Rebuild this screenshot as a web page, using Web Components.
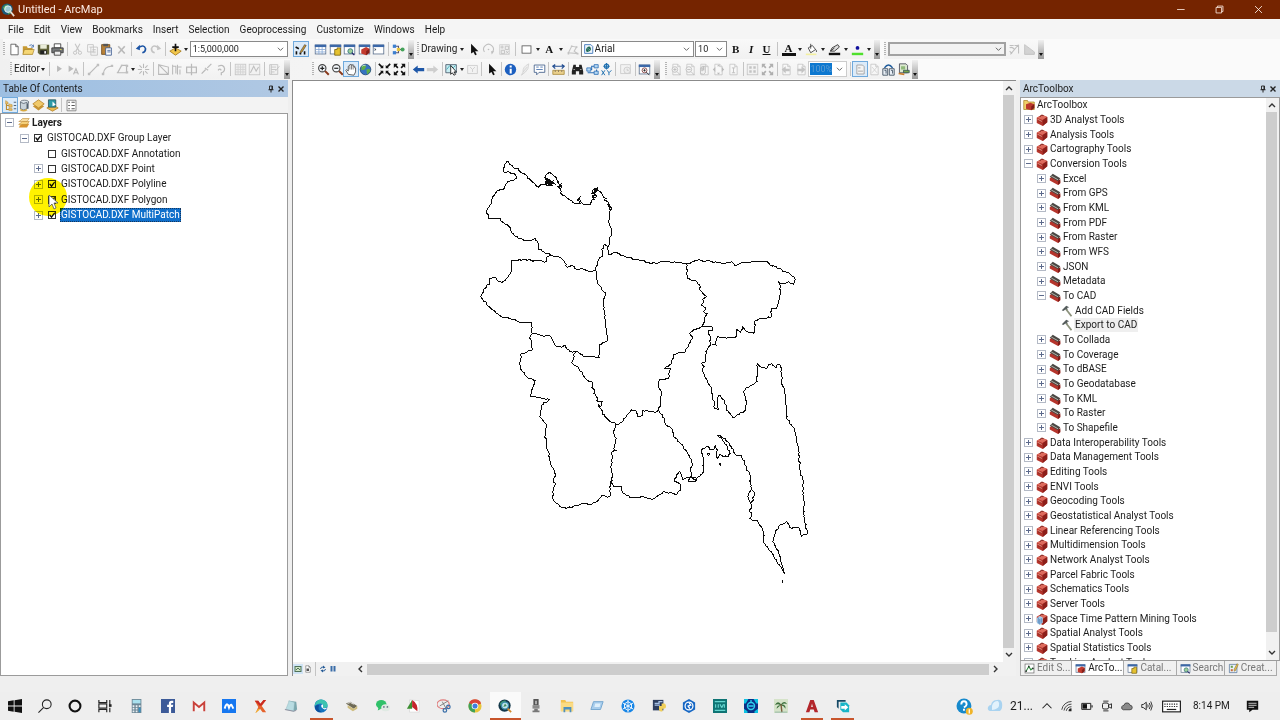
<!DOCTYPE html>
<html lang="en">
<head>
<meta charset="utf-8">
<title>Untitled - ArcMap</title>
<style>
html, body { margin: 0; height: 100%; }
body { font: 10px/14px Roboto, "Open Sans", sans-serif; color: #1c1c1c; background: #efefef; overflow: hidden; }
</style>
</head>
<body>
<arc-app></arc-app>
<script>
const define = (name, render) => customElements.define(name, class extends HTMLElement {
  connectedCallback() {
    if (this.shadowRoot) return;
    const root = this.attachShadow({ mode: 'open' });
    const t = document.createElement('template');
    t.innerHTML = render(this);
    root.append(t.content.cloneNode(true));
  }
});
const attr = (el, n, d = '') => el.getAttribute(n) ?? d;

/* Icons on a 16 x 16 grid */
const win = (extra = '') => `<rect x="1.5" y="2.5" width="13" height="11" fill="#fff" stroke="#5a6f8c"/><rect x="1" y="2" width="14" height="3" fill="#3c68a8"/>${extra}`;
const page = (extra = '') => `<path d="M3.500 1.500h6l3 3v10h-9z" fill="#fff" stroke="#555"/><path d="M9.500 1.500v3h3" fill="none" stroke="#555"/>${extra}`;
const lens = s => `<circle cx="6.500" cy="6.500" r="4.500" fill="#f4f8fc" stroke="#444" stroke-width="1.400"/><path d="M10 10l4.500 4.500" stroke="#8a3a1c" stroke-width="2.500"/><path d="${s}" stroke="#222" stroke-width="1.500"/>`;
const ln = (d, c = '#333', w = 1.3) => `<path d="${d}" fill="none" stroke="${c}" stroke-width="${w}"/>`;
const toolbox = '<path d="M1 5l7-4 7 3v7l-6 5-8-4z" fill="#b5352c"/><path d="M1 5l7-4 7 3-6 4z" fill="#dd6a5c"/><path d="M9 8l6-4v7l-6 5z" fill="#8c1f1a"/><path d="M5 4q2-4 5-2M4 8v2M7 9v2" stroke="#5c100e" fill="none"/><path d="M2 7l6 3" stroke="#f3b0a0"/>';
const ICONS = {
  arcmap: '<circle cx="7" cy="7" r="6.500" fill="#1c5a78"/><path d="M2 5q3-4 6-3l-1 4-3 3zM8 9l4-2-1 5-3 1z" fill="#4c9a5c"/><circle cx="8" cy="7" r="3.800" fill="#b9e2ee" fill-opacity=".8" stroke="#e9f4f8"/><path d="M11 10l4 5" stroke="#e8ddd0" stroke-width="2"/>',
  arcmapdark: '<circle cx="7.500" cy="7.500" r="7" fill="#14384a"/><path d="M2 5q3-4 7-3l-1 4-4 4z" fill="#3f9a6c"/><circle cx="8" cy="7.500" r="4" fill="#bfe4ee" stroke="#3a8da8" stroke-width="1.500"/><path d="M6 9l2-4 2 3z" fill="#47905c"/><path d="M11 11l4 4" stroke="#d08a2c" stroke-width="2"/>',
  new: page(), 
  open: '<path d="M1 4h5l1 2h6v8H1z" fill="#c79a33"/><path d="M3 8h12l-2 6H1z" fill="#f6d775" stroke="#9a7420" stroke-width=".7"/><path d="M9 3q3-2 5 1m0-2v3h-3" fill="none" stroke="#3c68a8"/>',
  save: '<path d="M1 2h14v12H3l-2-2z" fill="#5f6038"/><rect x="4" y="2" width="8" height="5" fill="#e9ecd8"/><rect x="4" y="9" width="8" height="5" fill="#222"/><rect x="9" y="10" width="2" height="3" fill="#fff"/>',
  print: '<path d="M4 1h8v5H4z" fill="#fff" stroke="#333"/><path d="M1 6h14v6H1z" fill="#777a7c" stroke="#333"/><path d="M4 10h8v5H4z" fill="#eee" stroke="#333"/><path d="M11 8h2" stroke="#e8e04c"/>',
  cut: ln('M5 1l5 9M11 1l-5 9', '#555') + '<circle cx="5" cy="12" r="2" fill="none" stroke="#444"/><circle cx="11" cy="12" r="2" fill="none" stroke="#444"/>',
  copy: '<path d="M2 2h7v9H2zM6 5h8v10H6z" fill="#fff" stroke="#444"/><path d="M8 8h4M8 10h4M8 12h4M4 5h2" stroke="#555"/>',
  paste: '<path d="M2 2h10v12H2z" fill="#b98238" stroke="#6c4a1c"/><path d="M4 1h6v3H4z" fill="#555"/><path d="M7 6h7v9H7z" fill="#fff" stroke="#35558c"/><path d="M9 9h4M9 11h4" stroke="#35558c"/>',
  del: ln('M4 4l8 9M12 4l-8 9', '#333', 2),
  undo: '<path d="M4 6q7-5 9 1 0 4-4 5" fill="none" stroke="#1d55a5" stroke-width="2"/><path d="M1 7l5-5v7z" fill="#1d55a5"/>',
  redo: '<path d="M12 6q-7-5-9 1 0 4 4 5" fill="none" stroke="#555" stroke-width="2"/><path d="M15 7l-5-5v7z" fill="#555"/>',
  add: '<path d="M8 6l7 4-7 5-7-5z" fill="#f2c74c" stroke="#a47818"/><path d="M7 1h2v3h3v2H9v4H7V6H4V4h3z" fill="#111"/>',
  edittool: ln('M2 5l4 2M2 13h2m3 0h2m3 0h2M3 10v2M13 10v2', '#111', 2) + '<path d="M8 10l5-8 2 1-5 8-3 2z" fill="#c69532" stroke="#222" stroke-width=".6"/>',
  table: win('<path d="M1.500 8h13M1.500 11h13M6 5v9M10 5v9" stroke="#88a9d6"/>'),
  catalog: win('<path d="M7 8h3V6h4v9H7z" fill="#e5c12f" stroke="#7a6410"/>'),
  searchw: win('<circle cx="9" cy="10" r="3" fill="#9fd09a" stroke="#2b6f77"/><path d="M11 12l3 3" stroke="#226" stroke-width="1.500"/>'),
  toolw: win('<path d="M4 8l6-3 4 2v5l-4 3-6-2z" fill="#c33a2e"/><path d="M10 10l4-3v5l-4 3z" fill="#86201a"/>'),
  python: win('<path d="M3 7l2 1-2 1" fill="none" stroke="#234"/>'),
  model: ln('M4 4h4v4h4M4 12h4V8', '#557') + '<rect x="1" y="2" width="4" height="4" fill="#3c7fd0"/><rect x="1" y="10" width="4" height="4" fill="#3c7fd0"/><rect x="6" y="6" width="4" height="4" fill="#e8c53a"/><circle cx="13" cy="8" r="2.500" fill="#44a35a"/>',
  pointer: '<path d="M5 1v12l3-2 2 4 2-1-2-4h4z" fill="#111"/>',
  rotate: ln('M3 11A6 6 0 1 1 13 11', '#444') + '<circle cx="8" cy="8" r="1" fill="#444"/><path d="M11 10h4l-3 4z" fill="#444"/>',
  group: '<path d="M2 2h12v12H2z" fill="#ddd" stroke="#777"/><path d="M3 5h4M5 3v4M9 4h4v4H9zM4 9h4v4H4zM10 10l3 3m0-3l-3 3" stroke="#444" fill="none"/>',
  rect: '<rect x="2.500" y="3.500" width="11" height="9" fill="#fff" stroke="#555"/>',
  nodes: ln('M3 12l4-8 6 1-3 5 4 3z', '#555') + '<path d="M2 11h2v3H2zM6 3h2v2H6zM12 4h2v2h-2zM13 12h2v2h-2z" fill="#555"/>',
  fill: '<path d="M4 6l5-3 4 5-6 4z" fill="#fff" stroke="#333"/><path d="M7 1v6M13 8q2 2 1 3" stroke="#333" fill="none"/><path d="M1 13h13v2H1z" fill="#f3f0a0"/>',
  pen: '<path d="M3 10l2-4 7-4 2 3-6 5z" fill="#ddd" stroke="#222"/><path d="M3 10l5-4" stroke="#222"/><path d="M1 12h14v3H1z" fill="#111"/>',
  marker: '<circle cx="8" cy="6" r="2.300" fill="#10109c"/><path d="M1 12h14v3H1z" fill="#4fe02c"/>',
  hatch: ln('M2 3h5M2 6q3-2 6 2M3 14l10-12M8 3h5v10M2 10l3 3', '#444'),
  tri: '<path d="M2 2v12h12v-3z" fill="#888" stroke="#444"/>',
  play: '<path d="M5 3v8l6-4z" fill="#333"/>', playa: '<path d="M2 3v8l6-4z" fill="#333"/><path d="M8 14l3-7 3 7M9 12h4" fill="none" stroke="#333" stroke-width="1.500"/>',
  line: ln('M3 13L13 3', '#333', 1.5) + '<path d="M1 12h3v3H1zM12 1h3v3h-3z" fill="#444"/>',
  arc: ln('M3 13Q4 4 13 4', '#333', 1.5) + '<path d="M1 12h3v3H1zM12 2h3v3h-3z" fill="#444"/>',
  poly: ln('M2 12l5-9h6v9M1 12h12', '#333', 1.5) + '<path d="M6 2h2v2H6zM12 2h3v3h-3zM12 10h3v3h-3z" fill="#444"/>',
  star: ln('M8 1v5M8 10v5M1 8h5M10 8h5M3 3l3 3M13 3l-3 3M3 13l3-3M13 13l-3-3', '#333'),
  cutp: ln('M2 2v12h12V5zM2 2l12 12', '#333') , align: ln('M2 2v12M2 4h4v9M8 2v12M8 5h5M11 8v6', '#333'),
  split: ln('M2 5h12v7H2zM8 1v14', '#333', 1.5), slash: ln('M2 13l5-5M9 6l5-5M6 6l4 3', '#333', 1.5), rot: ln('M5 4q7-3 8 3 0 4-4 5v3M5 9q2-3 4 0', '#333', 1.5),
  grid: '<rect x="1.500" y="1.500" width="13" height="13" fill="#ddd" stroke="#555"/><path d="M2 5h12M2 8h12M2 11h12M5 2v12M8 2v12M11 2v12" stroke="#888"/>',
  sketch: '<rect x="1.500" y="1.500" width="13" height="13" fill="#eee" stroke="#555"/>' + ln('M3 12l4-8 3 6 3-5', '#444'),
  form: '<path d="M2 2h10v12H2z" fill="#eee" stroke="#444"/><path d="M4 5h6M4 8h6M4 11h4M4 2v12M9 10l5-6" stroke="#444"/>',
  zoomin: lens('M4 6.500h5M6.500 4v5'), zoomout: lens('M4 6.500h5'),
  pan: '<path d="M4 14L1 9l1-1 2 2V4l2-1v-1h2v1l2-1v2h2v2h1v5l-2 4z" fill="#fff" stroke="#444"/><path d="M6 4v4M8 3v5M10 4v4" stroke="#666"/>',
  globe: '<circle cx="8" cy="8" r="6.500" fill="#3673c0" stroke="#1d4472"/><path d="M3 4q4-3 6 0l-2 4-4 1zM9 8l4-1 1 3-4 4z" fill="#5fae48"/><path d="M4 4q2-2 4-1" stroke="#cfe7ff" fill="none"/>',
  fixin: ln('M1 1l4 4M15 1l-4 4M1 15l4-4M15 15l-4-4', '#111', 2) + '<path d="M6.500 2.500v4h-4zM9.500 2.500v4h4zM6.500 13.500v-4h-4zM9.500 13.500v-4h4z" fill="#111"/>',
  fixout: ln('M3 3l3 3M13 3l-3 3M3 13l3-3M13 13l-3-3', '#111', 2) + '<path d="M1 1h5L1 6zM15 1h-5l5 5zM1 15h5l-5-5zM15 15h-5l5-5z" fill="#111"/>',
  back: '<path d="M1 8l6-5v3h8v4H7v3z" fill="#1e57a8"/>', fwd: '<path d="M15 8L9 3v3H1v4h8v3z" fill="#777"/>',
  selfeat: '<path d="M1 2h13v10H1z" fill="#c9eef3" stroke="#456"/><path d="M2 8l4-5 4 3 3-3" stroke="#3aa0ac" fill="none"/><path d="M7 3v11l2-2 2 3 2-1-2-3h3z" fill="#fff" stroke="#111"/>',
  clearsel: '<path d="M2 3h12v10H2z" fill="#eee" stroke="#666"/><path d="M5 5l3 3 3-3M8 8v3" stroke="#666" fill="none"/>',
  info: '<circle cx="8" cy="8" r="7" fill="#1c5fc0"/><path d="M7 7h2.500v6H7zM7 3h2.500v2.500H7z" fill="#fff"/>',
  bolt: '<path d="M12 1Q4 5 5 11l-2 4 5-4q4-3 4-10zM5 11l5-6" fill="#ddd" stroke="#666" stroke-width=".8"/>',
  popup: '<path d="M1.500 2.500h13v9h-7l-3 3v-3h-3z" fill="#fff" stroke="#3c5a86"/><path d="M4 5h3M9 5h3M4 8h8" stroke="#3c68a8"/>',
  measure: '<path d="M1 9h14v5H1z" fill="#ead08c" stroke="#a98a3c"/><path d="M1 4h14M4 2L1 4l3 3M12 2l3 2-3 3" stroke="#244f92" fill="none" stroke-width="1.500"/><path d="M4 9v2M8 9v2M12 9v2" stroke="#765"/>',
  find: '<path d="M3 2h3v3h4V2h3l2 8v4h-5v-4H6v4H1v-4z" fill="#222"/><path d="M3 8h2M11 8h2" stroke="#bbb"/>',
  route: ln('M2 8h5V4h7M2 12h11V8', '#2c6fb6') + '<path d="M1 6h5v4H1zM10 2h5v4h-5zM10 10h5v4h-5z" fill="#b7d8f2" stroke="#2c6fb6"/>',
  xy: '<circle cx="8" cy="4" r="2.500" fill="none" stroke="#1e6fb0" stroke-width="1.500"/><path d="M8 0v8M4 4h8M2 9l4 6M6 9l-4 6M9 9l2 3 3-3M11 12v3" stroke="#1e6fb0" fill="none" stroke-width="1.200"/>',
  time: '<path d="M2 2h12v11H2z" fill="#eee" stroke="#666"/><circle cx="10" cy="9" r="4" fill="#ddd" stroke="#666"/><path d="M10 7v2h2" stroke="#555" fill="none"/>',
  viewer: win('<circle cx="8" cy="9" r="3" fill="#fff" stroke="#7a3030"/><path d="M10 11l4 4M6.500 9h3M8 7.500v3" stroke="#222"/>'),
  dz1: page('<circle cx="6" cy="8" r="3.500" fill="#eee" stroke="#333"/><path d="M4 8h4M6 6v4M9 11l4 4" stroke="#333"/>'),
  dz2: page('<circle cx="6" cy="8" r="3.500" fill="#eee" stroke="#333"/><path d="M4 8h4M9 11l4 4" stroke="#333"/>'),
  dz3: page('<path d="M3 13V6h2v4-6h2v5-5h2v8l-2 2z" fill="#eee" stroke="#333"/>'),
  dz4: page('<path d="M1 8l3-3v6zM15 8l-3-3v6zM8 2l-2 2h4zM8 14l-2-2h4z" fill="#333"/>'),
  dz5: page('<path d="M6 6h4M8 6v6M6 12h4" stroke="#333"/>'),
  dz6: '<rect x="1.500" y="1.500" width="13" height="13" fill="#eee" stroke="#555"/><path d="M4 4h3v3H4zM9 4h3v3H9zM4 9h3v3H4zM9 9h3v3H9z" fill="#555"/>',
  dz7: page('<path d="M2 8l5-4v3h5v3H7v3z" fill="#555"/>'), dz8: page('<path d="M13 8L8 4v3H3v3h5v3z" fill="#555"/>'),
  draft: '<path d="M3.500 2.500h7l2 2v9h-9z" fill="#f4f4f4" stroke="#999"/><path d="M5 6h3M5 10h6" stroke="#999"/>',
  tog: page('<path d="M5 5l6 7M5 12l6-7" stroke="#777"/>'),
  swap: '<path d="M3 6q5-7 10 0" fill="none" stroke="#1f5c9c" stroke-width="1.800"/><path d="M1 7h6v8H1zM9 7h6v8H9z" fill="#e8eef5" stroke="#345"/><path d="M3 9h2v4M11 9h2v4" stroke="#345" fill="none"/>',
  ddp: '<path d="M3 1h8l2 2v9H3z" fill="#dbe9d0" stroke="#445"/><path d="M5 4h5v4H5z" fill="#8fb87a"/><path d="M8 9h7v3H8z" fill="#76a34c" stroke="#355"/><path d="M2 13l7 1" stroke="#c87c2c" stroke-width="2"/>',
  listorder: '<path d="M2 2l3 2v2H2zM6 6l4 1v3H6zM6 11l4 1v2H6z" fill="#e9bd67" stroke="#b98a30" stroke-width=".6"/><path d="M12 4h3M12 8h3M12 12h3" stroke="#567" stroke-width="1.500"/>' + ln('M3 6v7h3M3 8h3', '#b98a30'),
  listsrc: '<path d="M5 3h8v9H5z" fill="#4d5d6c"/><ellipse cx="8" cy="4" rx="5" ry="2.500" fill="#dce4ea" stroke="#5c6872"/><path d="M3 4v8q4 3 8 0V4q-4 3-8 0" fill="#c9d3da" stroke="#5c6872"/><path d="M3 13q4 3 8 0" stroke="#d8a93f" stroke-width="2" fill="none"/>',
  listvis: '<path d="M8 5l7 4-7 5-7-5z" fill="#c99534"/><path d="M8 1l7 5-7 5-7-5z" fill="#f1c969" stroke="#b8862c"/>',
  listsel: '<path d="M8 7l7 4-7 4-7-4z" fill="#e8b94f" stroke="#b8862c"/><path d="M3 1h9v9H3z" fill="#2d9ba8" stroke="#28515c"/><path d="M8 3v6l4-2z" fill="#fff"/>',
  options: '<path d="M2.500 1.500h11v13h-11z" fill="#fff" stroke="#777"/><path d="M4 4h2M4 8h2M4 12h2M8 4h4M8 8h4M8 12h4" stroke="#555" stroke-width="1.400"/>',
  layers: '<path d="M3 11l3-2h9l-3 5H1z" fill="#d9952f"/><path d="M3 8l3-2h9l-3 4H1z" fill="#f5cf77" stroke="#b97e22" stroke-width=".7"/><path d="M3 5l3-3h9l-3 4H1z" fill="#f8dda0" stroke="#b97e22" stroke-width=".7"/>',
  toolbox,
  toolroot: '<path d="M1 2h5l1 2h8v10H1z" fill="#f1cf68" stroke="#a9842a"/><path d="M4 7l6-2 5 2v5l-4 3-7-2z" fill="#bb382c"/><path d="M11 10l4-3v5l-4 3z" fill="#7f1c18"/>',
  toolset: '<path d="M1 7l4-3 10 6v4l-3 2L1 10z" fill="#b5352c"/><path d="M1 5l4-4 10 6-3 4z" fill="#4a4844"/><path d="M3 4l9 5" stroke="#d9d4c8"/><path d="M12 11l3-3v5l-3 3z" fill="#7c1a16"/>',
  hammer: '<path d="M1 7l6-6 4 2-3 1 1 2-2 1-1-1-3 2z" fill="#555c5c"/><path d="M7 6l7 9" stroke="#8c927c" stroke-width="2.400"/>',
  spacetime: toolbox + '<path d="M1 7l4-3 4 2v7l-4 3-4-3z" fill="#a9cdea"/><path d="M3 6v8M5 8v7M7 7v6" stroke="#4377b2"/>',
  editw: '<rect x="1.500" y="1.500" width="13" height="13" fill="#fff" stroke="#666"/><path d="M3 12l4-7 3 5 3-3" stroke="#2b8b3c" fill="none" stroke-width="1.500"/><path d="M2 11h2v2H2zM6 4h2v2H6zM12 7h2v2h-2z" fill="#222"/>',
  create: '<path d="M2 2h11v12H2z" fill="#e8f0f8" stroke="#4d6d94"/><path d="M4 4h3v3H4z" fill="#6b9f48"/><path d="M4 9h3v3H4z" fill="#c76c3c"/><path d="M9 9l4-8 2 1-4 9-2 1z" fill="#e6bf51" stroke="#6c5418" stroke-width=".6"/>',
  refresh: ln('M3 8q1-5 6-4M13 8q-1 5-6 4', '#245a96', 2) + '<path d="M8 1l5 4-5 2zM8 15l-5-4 5-2z" fill="#245a96"/>',
  pause: '<path d="M3 2h4v11H3zM9 2h4v11H9z" fill="#3a6da8"/>',
  dataview: '<path d="M1 2h14v12H1z" fill="#4f7258"/><path d="M3 4h10v8H3z" fill="#cfe5c4"/><path d="M4 10l4-4 4 4" stroke="#4f7258" fill="none" stroke-width="2"/>',
  layoutview: page('<path d="M5 7h5v5H5z" fill="#555"/>'),
  fontname: '<path d="M1 1h10l3 3v11H1z" fill="#eef4fb" stroke="#4a7fc0" stroke-width="1.500"/><path d="M10 5l-5 6M5 7q4-4 5 0t-5 5q-2-2 0-5" fill="none" stroke="#1f6a54" stroke-width="2"/>',
  pin: '<path d="M5 2h6v7H5z" fill="none" stroke="#222" stroke-width="1.800"/><path d="M10 2v7M3 9.500h10M8 10v5" stroke="#222" stroke-width="2"/>',
  close: ln('M3 3l10 10M13 3L3 13', 'currentColor', 2.8),
  /* taskbar */
  start: '<path d="M0 2.500l6.500-1v6H0zM7.500 1.300L16 0v7.500H7.500zM0 8.500h6.500v6L0 13.500zM7.500 8.500H16V16l-8.500-1.300z" fill="#111"/>',
  search: '<circle cx="10" cy="6" r="5" fill="none" stroke="#222" stroke-width="1.200"/><path d="M6.500 9.500L0.500 15.500" stroke="#222" stroke-width="1.300"/>',
  cortana: '<circle cx="8" cy="8" r="6.200" fill="none" stroke="#111" stroke-width="2.400"/>',
  taskview: '<path d="M1 1v3h9V1M1 15v-3h9v3M1 5.500h9v5H1zM13.500 1v6M13.500 10v5" fill="none" stroke="#222" stroke-width="1.300"/><path d="M12.500 6h3v3h-3z" fill="#222"/>',
  calc: '<path d="M2 0h11v16H2z" fill="#6d8796"/><path d="M3 1h9v4H3z" fill="#a9e1ee"/><path d="M3 7h2v2H3zM6.500 7h2v2h-2zM10 7h2v2h-2zM3 10h2v2H3zM6.500 10h2v2h-2zM3 13h2v2H3zM6.500 13h2v2h-2z" fill="#e9eff2"/><path d="M10 10h2v5h-2z" fill="#3591c4"/>',
  fb: '<path d="M0 0h16v16H0z" fill="#3c5a98"/><path d="M9 16V9H7V6.500h2V5q0-3 3-3h2v2.500h-1.500q-1 0-1 1v1H14L13.500 9h-2v7z" fill="#fff"/>',
  gmail: '<path d="M1 3v11h14V3" fill="#f7f3f2"/><path d="M2 14V4l6 5 6-5v10" fill="none" stroke="#c9413a" stroke-width="2.200"/>',
  maxthon: '<path d="M0 0h16v16H0z" fill="#1677f0"/><path d="M3 11q2-7 4-4l1 3q2-5 3-3l2 4" fill="none" stroke="#fff" stroke-width="2.200"/>',
  xapp: '<path d="M2 2h4l2 4 4-5h3l-5 7 5 7h-4l-3-4-5 5 3-7z" fill="#e5622b"/><path d="M8 8L2 2h4l4 5M15 1l-5 6-2-1 4-5z" fill="#c92a24"/><path d="M3 15l3-4 2 1-5 4z" fill="#f2b32c"/>',
  note: '<path d="M5 2l9 1 1 9-4 2z" fill="#7ba7ae"/><path d="M6 2l6 2-1 10-9-2z" fill="#b8dce2" stroke="#8fb6bd" stroke-width=".5"/><path d="M1 12l10 2 3-1" stroke="#889" fill="none"/>',
  edge: '<circle cx="8" cy="8" r="7.500" fill="#1473be"/><path d="M1 6q3-7 10-5 6 3 4 8-2 2-5 1 2-5-3-5-4 0-6 3z" fill="#3cc3b0"/><path d="M6 7q-3 5 3 8-7 1-8-6 1-3 5-2z" fill="#0c4f9c"/><path d="M9 10q-2-3 1-4 1 2 0 4 2 1 5 0-1 2-3 2z" fill="#fff"/>',
  gold: '<path d="M1 5l5-2 8 5-4 3z" fill="#6e6a55"/><path d="M3 7l7 4 4-3v3l-5 3-6-4z" fill="#cdbb7c"/><path d="M3 5l3-1 4 2" stroke="#eee" fill="none"/>',
  wechat: '<ellipse cx="6" cy="6" rx="6" ry="5" fill="#2fc169"/><path d="M3 9l-1 4 4-2z" fill="#2fc169"/><ellipse cx="11" cy="10" rx="5" ry="4" fill="#dfeae3"/><circle cx="9" cy="9" r="1" fill="#678"/><circle cx="13" cy="9" r="1" fill="#678"/>',
  redgreen: '<path d="M4 1l11 1v13H4z" fill="#fff" stroke="#ccc" stroke-width=".6"/><path d="M7 1v10L1 11z" fill="#3c8f32"/><path d="M7 1q7 4 6 13L7 9z" fill="#c4242b"/>',
  snip: '<ellipse cx="7" cy="6" rx="7" ry="5" fill="none" stroke="#e07d7d" stroke-width="1.300"/><path d="M3 8l10-6M6 3l5 9" stroke="#777"/><circle cx="9" cy="13" r="2" fill="none" stroke="#3a6fa8" stroke-width="1.400"/><circle cx="13" cy="9" r="2" fill="none" stroke="#3a6fa8" stroke-width="1.400"/>',
  chrome: '<circle cx="8" cy="8" r="7.500" fill="#e8c63a"/><path d="M8 8L1 5A7.500 7.500 0 0 1 15 5z" fill="#d9443a"/><path d="M8 8L1.300 4.600A7.500 7.500 0 0 0 8 15.500z" fill="#3fa15a"/><circle cx="8" cy="8" r="3.800" fill="#fff"/><circle cx="8" cy="8" r="2.900" fill="#3f7de0"/>',
  scan: '<path d="M5 0h6v7H5z" fill="#555"/><path d="M4 7h8v4H4z" fill="#8b8b8b"/><path d="M6 11h4v2H6zM4 13h8v2H4z" fill="#777"/><path d="M7 2h2v4H7z" fill="#bbb"/>',
  explorer: '<path d="M1 1h5l1 2h8v11H1z" fill="#f2c14f"/><path d="M1 4h14v10H1z" fill="#fadb83"/><path d="M4 15V9h9v6h-2v-3H6v3z" fill="#4e90bd"/>',
  slab: '<path d="M4 3h11l-3 9H1z" fill="#a8cdec" stroke="#6ea2cd"/><path d="M6 5h6l-1 4H5z" fill="#dff0fb"/>',
  bluehex: '<circle cx="8" cy="8" r="7.500" fill="#1685e6"/><path d="M8 3l4 2.500v5L8 13l-4-2.500v-5zM8 1v14M2 4.500l12 7M14 4.500l-12 7" fill="none" stroke="#fff" stroke-width="1"/>',
  pyfile: '<path d="M1 1h12v12H1z" fill="#2d3e5e"/><path d="M3 5h5V3h4M3 7h6" stroke="#a8c2e6" stroke-width="1.500" fill="none"/><path d="M8 8h3V5h3q2 0 2 4 0 2-3 2h-1v3q-4 1-4-2z" fill="#f0cf59"/>',
  hexc: '<path d="M8 0l7 4v8l-7 4-7-4V4z" fill="#1667c4"/><circle cx="8" cy="8" r="4.500" fill="none" stroke="#fff" stroke-width="1.400"/><path d="M8 4l2 3-3 1 2 3" stroke="#fff" fill="none" stroke-width="1.500"/>',
  tealapp: '<path d="M0 0h16v16H0z" fill="#0f7474"/><path d="M2 3h12M2 13h12M3 6v4M6 6v4M8 6l2 4M12 6l-2 4M13 6v4" stroke="#66d6d0" stroke-width="1.300" fill="none"/>',
  cyanapp: '<path d="M0 0h16v16H0z" fill="#0b2f86"/><path d="M0 0h5l-3 5H0zM16 0h-5l3 5h2zM0 16v-5l4 3v2zM16 16v-5l-4 3v2z" fill="#0bc2e2"/><circle cx="8" cy="8" r="4" fill="none" stroke="#2dd1ee" stroke-width="1.600"/><path d="M5 8h6M8 1v3" stroke="#2dd1ee" stroke-width="1.500"/>',
  palm: '<path d="M0 0h16v16H0z" fill="#d5e3c9"/><path d="M8 6q-4-5-7 1 4-2 6 0-4 0-4 4 3-3 5-4 4 1 5 4 1-4-4-5 3-2 6 0-3-5-7 0z" fill="#3c6f3c"/><path d="M8 6l1 9" stroke="#7b5b3a" stroke-width="1.600"/><path d="M1 15h14" stroke="#8fb4a0"/>',
  autocad: '<path d="M1 15L6 1h4l5 14h-4l-1-3H6l-1 3z" fill="#b3262b"/><path d="M7 9h2L8 5z" fill="#f0eeee"/>',
  camt: '<path d="M1 1h10v2H3v8l-2-2z" fill="#164a66"/><path d="M5 4h7l3 3v8H8l-3-3z" fill="#18b5c8"/><path d="M6 8h4V6l4 3.500-4 3.500v-2H6z" fill="#fff"/>',
  help: '<circle cx="7.500" cy="7.500" r="7" fill="#1689cc"/><path d="M5 6q0-3 2.500-3T10 6q0 1-2.500 3M7.500 10v2" fill="none" stroke="#fff" stroke-width="1.800"/><circle cx="12.500" cy="12.500" r="3.300" fill="#f0b429"/><path d="M12.500 10.500v4" stroke="#fff" stroke-width="1.200"/>',
  weather: '<path d="M3 13q-3-1-2-4 1-2 3-2 1-5 6-5 4-1 5 3 1 5-2 8z" fill="#a9d3f0"/><path d="M5 8q1-5 6-5 2 2 1 5t-7 4z" fill="#e2f2fc"/>',
  up: ln('M2 11l6-6 6 6', '#222', 1.4),
  wifi: ln('M1 13A13 13 0 0 1 14 2M4 14A10 10 0 0 1 14 5.500M7 14.500A7 7 0 0 1 14 9', '#444', 1.3) + '<path d="M10 15a4 4 0 0 1 4-4v4z" fill="#222"/>',
  battery: '<path d="M1 4.500h12v8H1z" fill="none" stroke="#222" stroke-width="1.300"/><path d="M2 5.500h6v6H2z" fill="#111"/><path d="M14 7h1.500v3H14z" fill="#222"/>',
  meet: '<rect x="2" y="4" width="8" height="8" rx="2" fill="none" stroke="#222" stroke-width="1.300"/><path d="M10 7l4-2v6l-4-2M3 1.500h7M3 14.500h7" fill="none" stroke="#222" stroke-width="1.200"/>',
  cloud: '<path d="M3 13q-3-1-2-4 1-2 3-2 1-4 5-3 2 0 3 3 3 0 3 3t-3 3z" fill="#8b8b8b" stroke="#333"/>',
  speaker: ln('M1 6h2l4-3v10l-4-3H1zM9 6q1 2 0 4M11 4q3 4 0 8M13 2q4 6 0 12', '#222', 1.2),
  keyboard: '<rect x="0.500" y="3.500" width="15" height="9" fill="#fff" stroke="#222"/><path d="M2 6h12M2 8h12" stroke="#222" stroke-dasharray="1 1"/><path d="M4 10.500h8" stroke="#222"/>',
  notify: '<path d="M1 1h14v11H8l-4 3v-3H1z" fill="#111"/><path d="M3 4h10M3 6.500h10M3 9h7" stroke="#efefef"/>',
  wmin: ln('M3 8h11', '#fbe9e0', 1.2), wmax: ln('M3 5h8v8H3zM5 5V3h8v8h-2', '#fbe9e0', 1.2), wclose: ln('M3 3l10 10M13 3L3 13', '#fbe9e0', 1.3)
};

define('arc-icon', el => `<style>:host{display:block;flex:none;width:var(--size,14px);height:var(--size,14px)}svg{display:block;width:100%;height:100%}</style>
<svg viewBox="0 0 16 16" aria-hidden="true">${ICONS[attr(el, 'name')] || ''}</svg>`);

define('tool-button', el => {
  const glyph = attr(el, 'glyph');
  return `<style>
:host{display:block;flex:none}
button{display:grid;place-items:center;width:14px;height:16px;padding:0;border:0;background:none;font:bold 11px/12px "Liberation Serif",serif;color:#111;--size:13px}
:host([off]) arc-icon{filter:grayscale(1);opacity:.3}
:host([on]){margin:0 -1px}
:host([on]) button{width:16px;box-shadow:inset 0 0 0 1px #6fa9dc;background:#dcebf9}
:host([bar]) button{border-bottom:3px solid #111;height:14px;line-height:10px}
</style><button aria-label="${attr(el, 'label')}" ${el.hasAttribute('off') ? 'disabled' : ''}>${glyph ? `<span style="${attr(el, 'label') === 'Italic' ? 'font-style:italic' : attr(el, 'label') === 'Underline' ? 'text-decoration:underline' : ''}">${glyph}</span>` : `<arc-icon name="${attr(el, 'icon')}"></arc-icon>`}</button>`;
});

define('drop-arrow', () => `<style>:host{display:grid;place-items:center;flex:none;width:6px;height:16px}i{border:2px solid transparent;border-top:3px solid #222;border-bottom:0}</style><i></i>`);
define('tool-sep', () => `<style>:host{display:block;flex:none;width:5px;height:14px}:host([blank]){visibility:hidden}i{display:block;width:1px;height:100%;margin:0 auto;background:#c4c4c4}</style><i></i>`);

define('combo-box', el => `<style>
:host{display:grid;flex:none;width:var(--w);height:16px;align-items:center}
select,svg{grid-area:1/1}
select{appearance:none;width:100%;height:100%;padding:0 2px;border:1px solid #8a8a8a;border-radius:0;background:#fff;font:9px/12px Roboto,sans-serif;color:#222;opacity:1}
:host([inset]) select{padding-left:13px;font-size:10px}
:host([off]) select{background:#f2f2f2;border:2px solid #a2a2a2;height:14px}
:host([picked]) select{border-color:#ccc;padding:0 1px;color:#5a9bd2;background:linear-gradient(#0d78d0,#0d78d0) 1px 1px/22px 12px no-repeat #fff}
svg{justify-self:end;width:7px;height:7px;margin-right:4px;pointer-events:none}
arc-icon{grid-area:1/1;margin-left:3px;z-index:1;--size:10px}
</style><select aria-label="${attr(el, 'label')}" ${el.hasAttribute('off') || el.hasAttribute('picked') ? 'disabled' : ''}><option>${attr(el, 'value')}</option></select>
${el.hasAttribute('inset') ? '<arc-icon name="fontname"></arc-icon>' : ''}<svg viewBox="0 0 8 8" aria-hidden="true"><path d="M1 2l3 3 3-3" fill="none" stroke="#555"/></svg>`);

define('tool-bar', () => `<style>
:host{display:flex;flex:none;align-items:center;height:20px;width:var(--w);background:linear-gradient(#f9f9f9,#f1f1f1)}
.grip{width:2px;height:14px;margin-right:2px;background:repeating-linear-gradient(#b4b4b4 0 1px,transparent 1px 2px)}
.items{display:flex;flex:1;align-items:center;justify-content:space-between;min-width:0}
.more{display:grid;place-items:end center;width:6px;height:19px;padding:0 0 3px;border:0;margin-left:2px;background:linear-gradient(#f0f0f0,#999)}
.more i{border:2px solid transparent;border-top:3px solid #111;border-bottom:0}
</style><span class="grip"></span><div class="items"><slot></slot></div><button class="more" aria-label="Toolbar options"><i></i></button>`);

define('title-bar', () => `<style>
:host{display:flex;align-items:center;height:19px;background:#752400;color:#fbe9e0;padding:0 2px 0 1px;font-size:11px}
h1{flex:1;margin:0 0 0 3px;font:inherit}
button{display:grid;place-items:center;width:39px;height:19px;padding:0;border:0;background:none;--size:11px}
</style><arc-icon name="arcmap"></arc-icon><h1>Untitled - ArcMap</h1>
<button aria-label="Minimize"><arc-icon name="wmin"></arc-icon></button><button aria-label="Restore"><arc-icon name="wmax"></arc-icon></button><button aria-label="Close"><arc-icon name="wclose"></arc-icon></button>`);

define('menu-bar', () => `<style>
:host{display:flex;gap:10px;height:20px;align-items:center;padding:1px 8px 0;box-sizing:border-box;background:#f5f5f5}
button{padding:0;border:0;background:none;font:inherit;color:#1c1c1c}
</style>${'File Edit View Bookmarks Insert Selection Geoprocessing Customize Windows Help'.split(' ').map(t => `<button>${t}</button>`).join('')}`);

define('dock-panel', el => `<style>
:host{display:flex;flex-direction:column;min-height:0}
header{display:flex;align-items:center;box-sizing:border-box;height:17px;padding:1px 2px 0 3px;background:var(--head);--size:8px}
h2{flex:1;margin:0;font:inherit}
button{display:grid;place-items:center;width:10px;height:14px;padding:0;border:0;background:none;color:#222}
</style><header><h2>${attr(el, 'heading')}</h2><button aria-label="Auto hide"><arc-icon name="pin"></arc-icon></button><button aria-label="Close"><arc-icon name="close"></arc-icon></button></header><slot></slot>`);

define('tree-row', el => {
  const t = attr(el, 'twist'), c = el.getAttribute('check'), label = attr(el, 'label');
  return `<style>
:host{display:flex;align-items:center;min-height:0;padding-left:var(--indent,0);white-space:nowrap}
.tw{flex:none;position:relative;box-sizing:border-box;width:9px;height:9px;padding:0;border:1px solid #b4bac6;background:#fff;margin-right:var(--tw-gap,3px)}
.tw[hidden]{display:block;visibility:hidden}
.tw::before,.tw.plus::after{content:"";position:absolute;background:#5c6a8c}
.tw::before{left:1px;top:3px;width:5px;height:1px}
.tw.plus::after{left:3px;top:1px;width:1px;height:5px}
arc-icon{--size:12px;margin-right:2px}
input{appearance:none;flex:none;display:grid;place-items:center;box-sizing:border-box;width:8px;height:8px;margin:0 5px 0 2px;border:1px solid #333;background:#fff}
input:checked::before{content:"";width:6px;height:6px;background:#111;clip-path:polygon(0 45%,20% 35%,40% 60%,90% 0,100% 20%,42% 100%)}
.t{line-height:14px;padding:0 1px;margin-left:-1px}
:host([bold]) .t{font-weight:bold}
:host([selected]) .t{background:#0f6fcb;color:#fff;outline:1px dotted #16365c;outline-offset:-1px}
:host([hot]) .t{background:#efefef}
</style>${t === 'none' ? '' : `<button class="tw ${t}" ${t ? '' : 'hidden'} aria-label="Expand or collapse"></button>`}${c !== null ? `<input type="checkbox" id="c" ${c === '1' ? 'checked' : ''}><label class="t" for="c">${label}</label>` : `<arc-icon name="${attr(el, 'icon')}"></arc-icon><span class="t">${label}</span>`}`;
});

define('scroll-rail', el => {
  const v = el.hasAttribute('vertical');
  const arrow = d => `<button aria-label="Scroll"><svg viewBox="0 0 8 8"><path d="${d}" fill="none" stroke="#333" stroke-width="1.400"/></svg></button>`;
  return `<style>
:host{display:flex;flex-direction:${v ? 'column' : 'row'};background:#f1f1f1;${v ? 'width:13px' : 'height:13px;flex:1'}}
button{display:grid;place-items:center;flex:none;width:${v ? 11 : 14}px;height:${v ? 14 : 13}px;padding:0;border:0;background:none}
svg{width:8px;height:8px}
.thumb{flex:1;background:#cdcdcd;margin:${v ? '0 2px var(--rest,0) 0' : '1px 0'}}
</style>${arrow(v ? 'M1 6l3-3 3 3' : 'M6 1L3 4l3 3')}<div class="thumb"></div>${arrow(v ? 'M1 2l3 3 3-3' : 'M2 1l3 3-3 3')}`;
});

/* Division boundaries; "lower" lines are digitised from the southern sheet, 600 units further down */
const UPPER = [
 '112,32 118,42 128,48 138,55 150,65 160,70 172,78 180,88 190,98 205,112 215,103 228,104 240,108 248,100 238,92 230,104 226,88 242,96 224,84 228,75 238,68 255,80 265,95 275,108 262,108 272,118 272,130 285,138 300,150 315,160 330,160 322,150 330,142 334,158 345,162 360,165 365,150 374,150 366,138 376,134 366,124 378,128 370,118 382,114 384,122 395,130 408,145 402,150 414,155 415,165 425,175 418,190 415,215 424,238 420,262 414,290 405,283 395,298 397,320 385,330 378,350 378,362 355,363 340,357 320,358 305,347 292,352 280,330 265,320 243,316 222,306 207,298 205,280 195,263 180,272 165,272 145,265 125,248 122,235 105,222 85,204 70,207 58,207 50,190 52,175 65,160 68,140 80,125 103,115 110,100 125,92 140,85 135,70 100,65 103,50 112,32',
 '224,92 248,108 232,86 254,102 228,100 252,92', '262,96 276,112 266,112 274,100', '366,120 380,140 370,144 380,118 364,132', '408,150 422,172 412,162 420,180',
 '414,290 415,312 440,308 470,322 510,332 545,340 590,334 650,340 690,330 720,333 760,342 785,335 795,346 815,338 850,334 885,333 900,345 935,358 960,372 975,385 970,402 955,395 935,402 925,393 930,405 930,435 920,475 905,475 905,500 880,505 855,512 852,550 830,545 818,530 812,548 800,538 798,560 770,565 742,560 738,585 725,585',
 '650,340 652,385 680,395 692,410 688,416 700,432 710,440 698,448 702,458 694,466 708,475 700,485 712,490 704,502 705,512 695,530 725,530 728,540 716,542 722,580 720,587 708,605 708,635 695,640 703,648 696,660 702,672 722,710 735,775 745,778 742,745 750,735 765,755 770,780 790,803 828,780 830,760 820,725 835,712 862,695 862,640 870,650 888,655 905,640 918,655 922,642 932,648 935,690 948,750 950,805 975,840 985,890 992,975 998,980 1000,1030 1002,1100 1012,1152 995,1158 985,1132 965,1135 950,1115 930,1125 915,1145 908,1175 922,1200 935,1240 945,1272 910,1215 882,1178 880,1145 862,1112 850,1112 840,1105 846,1094 838,1085 844,1074 842,1060 836,1045 836,1030 845,1018 852,1025 850,1050 842,1060',
 '695,530 670,540 658,550 668,560 655,585 645,607 612,612 605,640 585,655 602,655 595,685 568,690 565,712 575,725 572,755 565,780',
 '243,316 232,320 228,335 200,333 160,328 125,332 125,362 110,385 95,398 85,395 75,382 60,385 60,400 45,415 32,440 50,463 75,485 100,502 125,508 150,518 185,518 187,550 205,555 240,558 255,585 275,592 285,585 300,605 318,603 345,620 388,622 388,585 412,572 408,520 402,490 400,455 408,430 395,415 382,400 378,362',
 '187,550 180,560 187,600 152,612 150,655'
];
const LOWER = [
 '150,55 175,85 195,92 180,140 215,145 238,150 215,165 210,200 230,225 225,245 228,285 238,310 240,340 258,372 250,390 255,405 248,425 250,450 270,470 290,475 335,460 365,463 385,450 395,438 420,440 422,395',
 '318,3 305,38 325,52 345,85 352,90 365,95 372,130 385,155 398,154 394,168 384,164 392,176 405,200 425,218 438,222 430,250 440,265 430,295 438,302 426,306 425,330 422,350 428,380 422,395 432,410 455,408 457,425 480,443 500,443 520,440 550,447 580,425 620,433 633,420 630,402 612,392 628,365 638,388 663,380 655,396 680,390 663,380',
 '438,222 455,218 462,205 485,180 498,182 502,198 517,197 518,182 555,188 565,180 585,205 588,225 605,235 612,262 640,290 665,330 663,380 680,385 698,370 700,330 695,298 712,288 720,300 732,298 738,285 742,325 748,315 775,320 780,310 770,285 755,265 740,255 765,265 785,290 797,315 815,318 825,345 840,375 845,418',
 '711,311 719,311 717,316 711,314', '746,340 753,340 751,345 747,344', '937,690 939,698'
];
const coast = (text, dy, seed) => {
  let s = seed;
  const rnd = () => ((s = (s * 1103515245 + 12345) % 2147483648) / 2147483648 - .5);
  const p = text.split(' ').map(q => q.split(',').map(Number));
  let d = `M${p[0][0]} ${p[0][1] + dy}`;
  for (let i = 1; i < p.length; i++) {
    const [x0, y0] = p[i - 1], [x1, y1] = p[i], len = Math.hypot(x1 - x0, y1 - y0), n = Math.max(1, Math.round(len / 6));
    for (let k = 1; k <= n; k++) {
      const j = k < n ? 5 : 0, t = k / n;
      d += `L${(x0 + (x1 - x0) * t + rnd() * j).toFixed(1)} ${(y0 + (y1 - y0) * t + rnd() * j + dy).toFixed(1)}`;
    }
  }
  return d;
};
define('map-view', () => `<style>
:host{display:grid;grid-template:minmax(0,1fr) 14px/minmax(0,1fr) 13px;min-width:0;border:solid #8b8b8b;border-width:1px 0 0 1px;background:#f1f1f1}
.canvas{grid-area:1/1;display:grid;place-items:center;background:#fff;min-height:0;padding-bottom:2px;overflow:hidden}
.canvas svg{width:344px;height:440px}
scroll-rail[vertical]{grid-area:1/2}
.bar{display:flex;grid-area:2/1;align-items:center}
.views{display:flex;align-items:center;width:60px;--size:8px}
.views button{display:grid;place-items:center;width:10px;height:10px;padding:0;border:0;background:none}
.views button:first-child{background:#cfe3f5}
</style><div class="canvas"><svg viewBox="18 3 1032 1320" role="img" aria-label="Division boundaries"><g fill="none" stroke="#0a0a0a" stroke-width="3" shape-rendering="crispEdges">${UPPER.map((t, i) => `<path d="${coast(t, 0, i + 7)}"/>`).join('')}${LOWER.map((t, i) => `<path d="${coast(t, 600, i + 31)}"/>`).join('')}</g></svg></div>
<scroll-rail vertical></scroll-rail>
<div class="bar"><div class="views"><button aria-label="Data view"><arc-icon name="dataview"></arc-icon></button><button aria-label="Layout view"><arc-icon name="layoutview"></arc-icon></button><tool-sep></tool-sep><button aria-label="Refresh"><arc-icon name="refresh"></arc-icon></button><button aria-label="Pause"><arc-icon name="pause"></arc-icon></button></div><scroll-rail></scroll-rail></div>`);

define('toc-panel', () => `<style>
:host{display:flex;flex:1;flex-direction:column;min-height:0;background:#f3f3f3}
.tools{display:flex;align-items:center;height:16px;padding:0 3px}
.box{position:relative;flex:1;border:1px solid #9b9b9b;background:#fff}
.rows{display:grid;grid-auto-rows:1fr;height:108px;padding-top:1px}
.spot{position:absolute;left:28px;top:64px;width:38px;height:38px;border-radius:50%;background:#fff200;mix-blend-mode:multiply}
.cursor{position:absolute;left:47px;top:80px;width:11px;height:16px}
</style><div class="tools"><tool-button on icon="listorder" label="List by drawing order"></tool-button><tool-button icon="listsrc" label="List by source"></tool-button><tool-button icon="listvis" label="List by visibility"></tool-button><tool-button icon="listsel" label="List by selection"></tool-button><tool-sep></tool-sep><tool-button icon="options" label="Options"></tool-button></div>
<div class="box"><div class="rows">
<tree-row bold twist="minus" icon="layers" label="Layers" style="--indent:4px;--tw-gap:4px"></tree-row>
<tree-row twist="minus" check="1" label="GISTOCAD.DXF Group Layer" style="--indent:19px"></tree-row>
${[['', 0, 'Annotation'], ['plus', 0, 'Point'], ['plus', 1, 'Polyline'], ['plus', 1, 'Polygon'], ['plus', 1, 'MultiPatch']].map(([t, c, n], i) => `<tree-row twist="${t}" check="${c}" label="GISTOCAD.DXF ${n}" style="--indent:33px" ${i === 4 ? 'selected' : ''}></tree-row>`).join('')}
</div><div class="spot"></div><svg class="cursor" viewBox="0 0 11 16" aria-hidden="true"><path d="M1 1v12l3-3 2 5 2-1-2-5h4z" fill="#fff" stroke="#555" stroke-width=".8"/></svg></div>`);

define('toolbox-panel', () => {
  const box = n => `<tree-row twist="plus" icon="${n.startsWith('Space') ? 'spacetime' : 'toolbox'}" label="${n}" style="--indent:3px"></tree-row>`;
  const set = (n, t = 'plus') => `<tree-row twist="${t}" icon="toolset" label="${n}" style="--indent:16px"></tree-row>`;
  const tool = (n, a = '') => `<tree-row twist="none" icon="hammer" label="${n}" ${a} style="--indent:40px"></tree-row>`;
  return `<style>
:host{display:flex;flex:1;flex-direction:column;min-height:0}
.box{display:flex;flex:1;min-height:0;border:1px solid #9b9b9b;background:#fff;overflow:hidden}
.rows{display:grid;grid-auto-rows:1fr;flex:1;height:572px}
.tabs{display:grid;grid-template-columns:52fr 52fr 52fr 48fr 52fr;height:15px;padding-right:3px}
.tabs button{display:flex;align-items:center;gap:2px;padding:0 0 0 3px;border:1px solid #aaa;border-top:0;background:#f0f0f0;font:inherit;color:#777;min-width:0;white-space:nowrap;--size:11px}
.tabs button+button{border-left:0}
.tabs .on{background:#fff;color:#222}
</style><div class="box"><div class="rows">
<tree-row twist="none" icon="toolroot" label="ArcToolbox" style="--indent:2px"></tree-row>
${['3D Analyst Tools', 'Analysis Tools', 'Cartography Tools'].map(box).join('')}
<tree-row twist="minus" icon="toolbox" label="Conversion Tools" style="--indent:3px"></tree-row>
${['Excel', 'From GPS', 'From KML', 'From PDF', 'From Raster', 'From WFS', 'JSON', 'Metadata'].map(n => set(n)).join('')}${set('To CAD', 'minus')}
${tool('Add CAD Fields')}${tool('Export to CAD', 'hot')}
${['To Collada', 'To Coverage', 'To dBASE', 'To Geodatabase', 'To KML', 'To Raster', 'To Shapefile'].map(n => set(n)).join('')}
${['Data Interoperability Tools', 'Data Management Tools', 'Editing Tools', 'ENVI Tools', 'Geocoding Tools', 'Geostatistical Analyst Tools', 'Linear Referencing Tools', 'Multidimension Tools', 'Network Analyst Tools', 'Parcel Fabric Tools', 'Schematics Tools', 'Server Tools', 'Space Time Pattern Mining Tools', 'Spatial Analyst Tools', 'Spatial Statistics Tools', 'Tracking Analyst Tools'].map(box).join('')}
</div><scroll-rail vertical style="--rest:14px"></scroll-rail></div>
<div class="tabs"><button><arc-icon name="editw"></arc-icon>Edit S...</button><button class="on"><arc-icon name="toolw"></arc-icon>ArcTo...</button><button><arc-icon name="catalog"></arc-icon>Catal...</button><button><arc-icon name="searchw"></arc-icon>Search</button><button><arc-icon name="create"></arc-icon>Creat...</button></div>`;
});

define('task-bar', () => {
  const b = (n, cls = '') => `<button class="${cls}" aria-label="${n}"><arc-icon name="${n}"></arc-icon></button>`;
  return `<style>
:host{display:flex;align-items:stretch;height:28px;background:#eee}
button{display:grid;place-items:center;padding:0;border:0;border-bottom:2px solid transparent;border-top:2px solid transparent;background:none;min-width:0}
.sys{display:grid;grid-template-columns:repeat(4,30px);margin-right:2px}
.apps{display:grid;grid-template-columns:repeat(24,1fr);flex:0 1 736px}
.run{border-bottom-color:#c8552c;margin:0 4px}
.cur{background:#fafafa;border-bottom-color:#c8552c}
.tray{display:flex;align-items:center;margin-left:auto}
.tray button{width:20px;--size:12px}
.tray .h{width:24px;--size:17px;margin-right:7px}.tray .w{width:24px;--size:16px;margin-right:3px}.tray .k{width:28px;--size:19px}.tray .n{width:34px;margin:0 11px 0 6px;--size:13px}
.temp{width:27px;font-size:12px}.time{width:36px;margin-left:8px;white-space:nowrap}
</style><div class="sys">${['start', 'search', 'cortana', 'taskview'].map(n => b(n)).join('')}</div>
<div class="apps">${'calc fb gmail maxthon xapp note edge gold wechat redgreen snip chrome arcmapdark scan explorer slab bluehex pyfile hexc tealapp cyanapp palm autocad camt'.split(' ').map(n => b(n, n === 'arcmapdark' ? 'cur' : /^(edge|autocad|camt)$/.test(n) ? 'run' : '')).join('')}</div>
<div class="tray">${b('help', 'h')}${b('weather', 'w')}<span class="temp">21...</span>${['up', 'wifi', 'battery', 'meet', 'cloud', 'speaker'].map(n => b(n)).join('')}${b('keyboard', 'k')}<span class="time">8:14 PM</span>${b('notify', 'n')}</div>`;
});

/* Toolbar shorthand: | separator, v drop arrow, trailing - disabled, trailing ! pressed */
const bar = spec => spec.trim().split(/\s+/).map(t => {
  if (t === '|') return '<tool-sep></tool-sep>';
  if (t === 'v') return '<drop-arrow></drop-arrow>';
  const n = t.replace(/[-!]$/, '');
  return `<tool-button icon="${n}" label="${n}" ${t.endsWith('-') ? 'off' : ''} ${t.endsWith('!') ? 'on' : ''}></tool-button>`;
}).join('');

define('arc-app', () => `<style>
:host{display:flex;flex-direction:column;height:100vh;background:#efefef}
.bars{display:grid;grid-template-rows:20px 20px;padding-bottom:1px;background:linear-gradient(90deg,#f0f0f0,#fafafa 60%)}
.row{display:flex;align-items:center}
.name{padding:0;border:0;background:none;font:inherit;color:#1c1c1c}
main{display:grid;grid-template-columns:288px minmax(0,1fr) 260px;gap:4px;flex:1;min-height:0;padding-bottom:16px}
toc-panel,toolbox-panel{min-height:0}
</style><title-bar></title-bar><menu-bar></menu-bar>
<div class="bars">
<div class="row" style="padding-left:3px">
<tool-bar style="--w:411px">${bar('new open save print | cut- copy- paste del- | undo redo- | add v')}<combo-box label="Scale" value="1:5,000,000" style="--w:98px"></combo-box><tool-sep blank></tool-sep>${bar('edittool!')}<tool-sep blank></tool-sep>${bar('table catalog searchw toolw python | model')}</tool-bar>
<tool-bar style="--w:463px;margin-left:3px"><button class="name">Drawing</button>${bar('v pointer rotate- group- | rect v')}<tool-button glyph="A" label="Text"></tool-button>${bar('v nodes-')}<combo-box inset label="Font" value="Arial" style="--w:113px"></combo-box><combo-box label="Font size" value="10" style="--w:32px"></combo-box><tool-button glyph="B" label="Bold"></tool-button><tool-button glyph="I" label="Italic"></tool-button><tool-button glyph="U" label="Underline"></tool-button><tool-sep></tool-sep><tool-button bar glyph="A" label="Font color"></tool-button>${bar('v fill v pen v marker v')}</tool-bar>
<tool-bar style="--w:160px;margin-left:4px"><combo-box off label="Image layer" value="" style="--w:118px"></combo-box>${bar('hatch- tri-')}</tool-bar>
</div>
<div class="row" style="padding-left:10px">
<tool-bar style="--w:280px"><button class="name">Editor</button>${bar('v | play- playa- | line- arc- poly- v star- | cutp- align- split- slash- rot- | grid- sketch- | form-')}</tool-bar>
<tool-bar style="--w:348px;margin-left:22px">${bar('zoomin zoomout pan! globe | fixin fixout | back fwd- | selfeat v clearsel- | pointer | info bolt- popup | measure | find route xy | time- | viewer')}</tool-bar>
<tool-bar style="--w:253px;margin-left:5px">${bar('dz1- dz2- dz3- dz4- dz5- | dz6- fixout- | dz7- dz8-')}<combo-box picked label="Zoom" value="100%" style="--w:39px"></combo-box>${bar('| draft! tog- swap ddp')}</tool-bar>
</div></div>
<main>
<dock-panel heading="Table Of Contents" style="--head:linear-gradient(90deg,#9dbfe2,#b0c8e3)"><toc-panel></toc-panel></dock-panel>
<map-view></map-view>
<dock-panel heading="ArcToolbox" style="--head:#cbd9e7"><toolbox-panel></toolbox-panel></dock-panel>
</main>
<task-bar></task-bar>`);
</script>
</body>
</html>
